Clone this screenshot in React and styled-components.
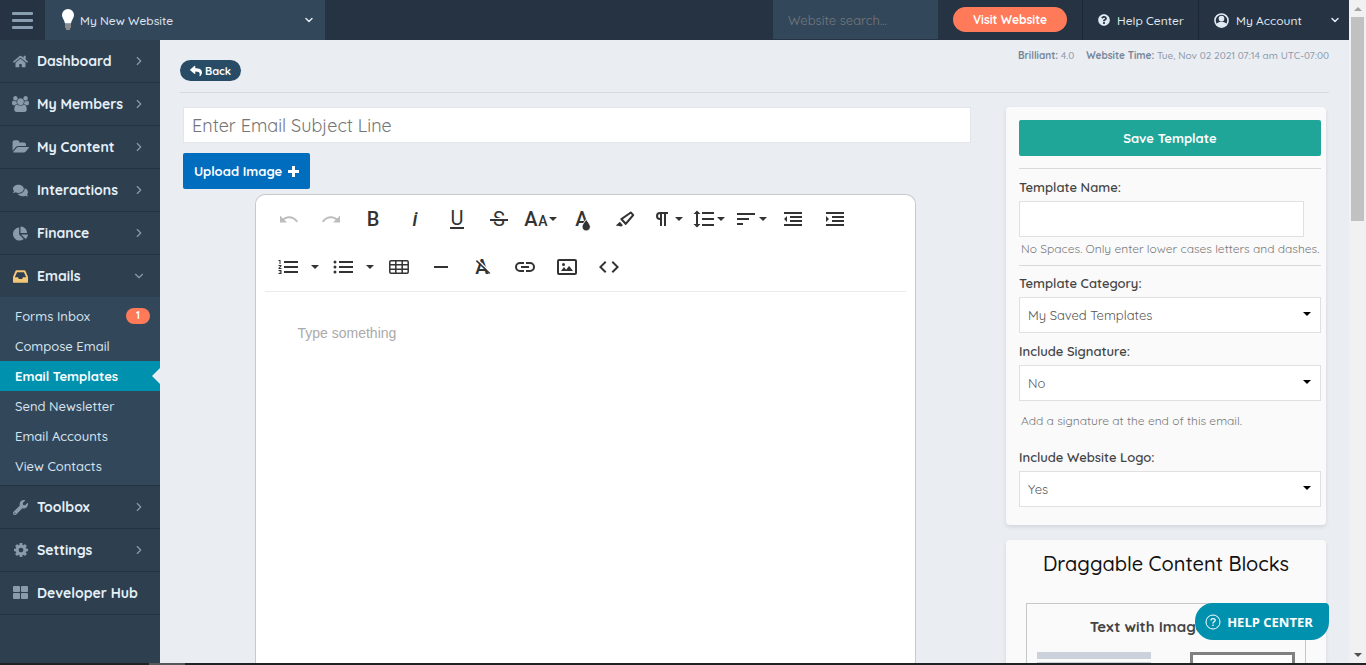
import React from 'react';
import styled, { createGlobalStyle, css } from 'styled-components';
import { FaHome, FaComments, FaChartPie, FaWrench, FaReply, FaQuestionCircle } from 'react-icons/fa';
import { FiChevronDown, FiChevronRight } from 'react-icons/fi';

const GlobalStyle = createGlobalStyle`
  * {
    box-sizing: border-box;
  }

  body {
    margin: 0;
    overflow: hidden;
    background: #eaedf2;
    color: #333;
    font-family: Quicksand, Lato, sans-serif;
    font-size: 13px;
  }

  button, input, select, textarea {
    font-family: inherit;
  }

  a {
    color: inherit;
    text-decoration: none;
  }
`;

const Screen = styled.div`
  display: flex;
  flex-direction: column;
  height: 100vh;
`;

const Viewport = styled.div`
  display: flex;
  flex: 1;
  min-height: 0;
`;

const Page = styled.div`
  display: flex;
  flex-direction: column;
  flex: 1;
  min-width: 0;
`;

const TopBar = styled.header`
  display: flex;
  height: 40px;
  flex-shrink: 0;
  background: #253342;
  color: #e1eaf2;
`;

const MenuToggle = styled.button`
  display: flex;
  flex-direction: column;
  align-items: center;
  justify-content: center;
  gap: 4px;
  width: 45px;
  padding: 0;
  border: 0;
  background: #253342;
`;

const MenuLine = styled.span`
  width: 21px;
  height: 3px;
  border-radius: 1px;
  background: #8a9eb2;
`;

const SitePicker = styled.button`
  display: flex;
  align-items: center;
  gap: 5px;
  width: 280px;
  padding: 0 10px 0 16px;
  border: 0;
  background: #33475b;
  color: #e1eaf2;
  font-size: 12px;
  font-weight: 500;

  > :last-child {
    margin-left: auto;
  }
`;

const TopActions = styled.div`
  display: flex;
  margin-left: auto;
`;

const SiteSearch = styled.input`
  width: 165px;
  height: 39px;
  padding: 0 15px;
  border: 0;
  background: #33475b;
  color: #e1eaf2;
  font-size: 13px;

  &::placeholder {
    color: #76797d;
  }
`;

const VisitWebsite = styled.a`
  align-self: flex-start;
  width: 114px;
  margin: 7px 15px 0;
  border-radius: 13px;
  background: #ff7a59;
  color: #fff;
  font-size: 12px;
  font-weight: 700;
  line-height: 25px;
  text-align: center;
`;

const TopLink = styled.a`
  display: flex;
  align-items: center;
  gap: 7px;
  width: ${(props) => props.$width}px;
  padding: 0 8px 0 15px;
  border-left: 1px solid #1b2733;
  font-size: 12px;
  font-weight: 500;
  white-space: nowrap;

  > :nth-child(3) {
    margin-left: auto;
  }
`;

const Body = styled.div`
  display: flex;
  flex: 1;
  min-height: 0;
  overflow: hidden;
`;

const Sidebar = styled.nav`
  width: 160px;
  flex-shrink: 0;
  background: #2e3f50;
`;

const NavItem = styled.a`
  display: flex;
  align-items: center;
  height: ${(props) => (props.$open ? 42 : 43)}px;
  padding: 0 14px 0 12px;
  border-bottom: ${(props) => (props.$open ? 0 : 1)}px solid #253342;
  color: #e5f0f8;
  font-size: 14px;
  font-weight: 700;
  white-space: nowrap;
`;

const NavIcon = styled.span`
  display: flex;
  justify-content: center;
  width: 17px;
  margin-right: 8px;
  color: ${(props) => (props.$open ? '#f5c878' : '#8a9bac')};
`;

const NavArrow = styled.span`
  display: flex;
  margin-left: auto;
  color: #8a9bac;
`;

const SubMenu = styled.div`
  padding: 4px 0;
  border-bottom: 1px solid #253342;
  background: #33475b;
`;

const SubItem = styled.a`
  position: relative;
  display: flex;
  align-items: center;
  justify-content: space-between;
  height: 30px;
  padding: 0 10px 0 15px;
  color: #d6e4ee;
  font-size: 13px;
  font-weight: 500;

  ${(props) =>
    props.$active &&
    css`
      background: #0091ae;
      color: #fff;
      font-weight: 700;

      &::after {
        content: '';
        position: absolute;
        top: 7px;
        right: 0;
        border: 8px solid transparent;
        border-left: 0;
        border-right-color: #eaedf2;
      }
    `}
`;

const CountBadge = styled.span`
  width: 24px;
  border-radius: 8px;
  background: #ff7a59;
  color: #fff;
  font-size: 10px;
  font-weight: 700;
  line-height: 16px;
  text-align: center;
`;

const Main = styled.main`
  display: flex;
  flex-direction: column;
  flex: 1;
  min-width: 0;
  padding: 0 20px;
`;

const PageHead = styled.div`
  display: flex;
  justify-content: space-between;
  align-items: flex-start;
  height: 53px;
  flex-shrink: 0;
  border-bottom: 1px solid #d6d9dd;
`;

const BackLink = styled.a`
  display: flex;
  align-items: center;
  gap: 3px;
  height: 21px;
  margin-top: 20px;
  padding: 0 10px;
  border-radius: 11px;
  background: #284b66;
  color: #fff;
  font-size: 11px;
  font-weight: 700;
`;

const SiteInfo = styled.div`
  display: flex;
  gap: 12px;
  margin-top: 9px;
  color: #8d99ab;
  font-size: 10px;
  font-weight: 500;
  line-height: 14px;

  b {
    color: #75869a;
  }
`;

const Columns = styled.div`
  display: flex;
  gap: 35px;
  flex: 1;
  min-height: 0;
  padding: 14px 3px 0;
`;

const EditorColumn = styled.section`
  display: flex;
  flex-direction: column;
  align-items: flex-start;
  flex: 1;
  min-width: 0;
`;

const SubjectInput = styled.input`
  width: 100%;
  height: 36px;
  flex-shrink: 0;
  padding: 0 8px;
  border: 1px solid #e3e5e8;
  background: #fff;
  font-size: 18px;

  &::placeholder {
    color: #757575;
  }
`;

const UploadButton = styled.button`
  display: flex;
  align-items: center;
  justify-content: center;
  gap: 6px;
  width: 127px;
  height: 36px;
  flex-shrink: 0;
  margin: 10px 0 5px;
  padding: 0;
  border: 0;
  border-radius: 2px;
  background: #006dbf;
  color: #fff;
  font-size: 13px;
  font-weight: 700;
`;

const Editor = styled.div`
  display: flex;
  flex-direction: column;
  flex: 1;
  align-self: center;
  width: 661px;
  max-width: 100%;
  min-height: 0;
  margin-left: 16px;
  padding: 0 9px;
  border: 1px solid #c8c9cb;
  border-bottom: 0;
  border-radius: 10px 10px 0 0;
  background: #fff;
`;

const Toolbar = styled.div`
  border-bottom: 1px solid #ebebeb;
`;

const ToolRow = styled.div`
  display: flex;
  height: 48px;
  padding-left: 5px;
`;

const ToolButton = styled.button`
  display: flex;
  align-items: center;
  justify-content: center;
  width: ${(props) => (props.$split ? 55 : 42)}px;
  padding: 0 ${(props) => (props.$split ? 0 : 4)}px 0 0;
  border: 0;
  background: transparent;
  color: #333;

  &:disabled {
    color: #bdbdbd;
  }

  svg {
    flex-shrink: 0;
  }
`;

const ToolCaret = styled.span`
  margin-left: ${(props) => (props.$wide ? 11 : 1)}px;
  border: 4px solid transparent;
  border-top-color: #333;
  border-bottom: 0;
`;

const MessageArea = styled.textarea`
  flex: 1;
  padding: 32px 33px;
  border: 0;
  outline: 0;
  resize: none;
  font-family: 'Liberation Sans', Arial, sans-serif;
  font-size: 14px;
  line-height: 18px;

  &::placeholder {
    color: #aaa;
  }
`;

const Aside = styled.aside`
  width: 320px;
  flex-shrink: 0;
`;

const Card = styled.section`
  margin-bottom: 15px;
  padding: 13px 5px 18px 13px;
  border-radius: 4px;
  background: #fafafa;
  box-shadow: 0 2px 4px rgba(0, 0, 0, 0.1);
`;

const SaveButton = styled.button`
  width: 100%;
  height: 36px;
  border: 0;
  border-radius: 2px;
  background: #1fa699;
  color: #fff;
  font-size: 13px;
  font-weight: 700;
`;

const Divider = styled.hr`
  margin: ${(props) => props.$top}px 0 0;
  border: 0;
  border-top: 1px solid #d9d9d9;
`;

const Label = styled.label`
  display: block;
  padding-top: ${(props) => props.$top}px;
  color: #444;
  font-size: 13px;
  font-weight: 600;
  line-height: 18px;
`;

const fieldStyles = css`
  display: block;
  height: 36px;
  padding: 0 8px;
  border: 1px solid #e0e0e0;
  border-radius: 0;
  background: #fff;
  color: #555;
  font-size: 13px;
`;

const NameInput = styled.input`
  ${fieldStyles}
  width: 285px;
  margin-top: 5px;
`;

const SelectWrap = styled.div`
  position: relative;
  margin-top: 5px;

  &::after {
    content: '';
    position: absolute;
    top: 15px;
    right: 10px;
    border: 4px solid transparent;
    border-top-color: #000;
    border-bottom: 0;
    pointer-events: none;
  }
`;

const Select = styled.select`
  ${fieldStyles}
  width: 100%;
  appearance: none;
`;

const Hint = styled.p`
  margin: ${(props) => props.$gap}px 0;
  padding-left: 2px;
  color: #777;
  font-size: 12px;
  line-height: 16px;
  white-space: nowrap;
`;

const BlocksTitle = styled.h2`
  margin: 0;
  color: #111;
  font-size: 20px;
  font-weight: 500;
  line-height: 24px;
  text-align: center;
`;

const BlocksCard = styled(Card)`
  padding: 12px 20px;
`;

const ContentBlock = styled.div`
  height: 150px;
  margin-top: 27px;
  padding: 13px 10px;
  border: 1px solid #c8c8c8;
`;

const BlockName = styled.div`
  padding-right: 38px;
  color: #444;
  font-size: 15px;
  font-weight: 700;
  line-height: 20px;
  text-align: center;
`;

const BlockPreview = styled.div`
  display: flex;
  justify-content: space-between;
  margin-top: 15px;
`;

const PreviewLines = styled.div`
  display: grid;
  gap: 3px;
  align-content: start;
  width: 114px;
`;

const PreviewLine = styled.div`
  height: 7px;
  background: #cbd2db;
`;

const PreviewImage = styled.div`
  width: 105px;
  height: 80px;
  border: 3px solid #808080;
  background: #fff;
`;

const HelpWidget = styled.button`
  position: fixed;
  right: 37px;
  bottom: 25px;
  display: flex;
  align-items: center;
  justify-content: center;
  gap: 6px;
  width: 134px;
  height: 37px;
  padding: 0 6px 0 0;
  border: 0;
  border-radius: 18px 4px 18px 18px;
  background: #0091ae;
  color: #fff;
  font-family: 'Open Sans', sans-serif;
  font-size: 13px;
  font-weight: 700;
`;

const ScrollTrack = styled.div`
  display: flex;
  flex-direction: column;
  align-items: center;
  justify-content: space-between;
  width: 17px;
  flex-shrink: 0;
  background: #f1f1f1;
`;

const ScrollThumb = styled.div`
  width: 13px;
  height: 204px;
  margin-bottom: auto;
  background: #c1c1c1;
`;

const ScrollArrow = styled.span`
  display: flex;
  align-items: center;
  height: 17px;
  color: ${(props) => (props.$off ? '#a3a3a3' : '#505050')};
`;

const BottomEdge = styled.div`
  height: 2px;
  flex-shrink: 0;
  padding-left: 149px;
  background: #202326;
`;

const BottomEdgeTab = styled.div`
  width: 36px;
  height: 2px;
  background: #55585a;
`;

const Icon = ({ children, size = 24 }) => (
  <svg width={size} height={size} viewBox="0 0 24 24" fill="currentColor" aria-hidden="true">
    {children}
  </svg>
);

const Glyph = (props) => (
  <text textAnchor="middle" fontFamily="Roboto, sans-serif" fontSize="20" fontWeight="500" {...props} />
);

const BulbIcon = () => (
  <svg width="14" height="24" viewBox="0 0 14 24" aria-hidden="true">
    <path d="M7 1a6 6 0 0 0-6 6c0 3 2.400 4.600 3 8.500h6C10.600 11.600 13 10 13 7a6 6 0 0 0-6-6Z" fill="#fff" />
    <path d="M4 17h6M4 19h6M5 21h4" stroke="#a8a29b" strokeWidth="1.500" />
  </svg>
);

const AccountIcon = () => (
  <svg width="15" height="15" viewBox="0 0 24 24" aria-hidden="true">
    <circle cx="12" cy="12" r="10.500" fill="none" stroke="currentColor" strokeWidth="2.600" />
    <circle cx="12" cy="9" r="4.500" fill="currentColor" />
    <path d="M4 18c1-3 4-3.500 8-3.500s7 .5 8 3.500c-2 2.500-4.500 4-8 4s-6-1.500-8-4Z" fill="currentColor" />
  </svg>
);

const PlusIcon = () => (
  <svg width="11" height="11" viewBox="0 0 11 11" fill="currentColor" aria-hidden="true">
    <path d="M4 0h3v4h4v3H7v4H4V7H0V4h4z" />
  </svg>
);

const UsersIcon = () => (
  <svg width="17" height="16" viewBox="0 0 1920 1792" fill="currentColor" aria-hidden="true">
    <path d="M593 896q-162 5-265 128h-134q-82 0-138-40.500t-56-118.500q0-353 124-353 6 0 43.500 21t97.500 42.500 119 21.500q67 0 133-23-5 37-5 66 0 139 81 256zm1071 637q0 120-73 189.500t-194 69.500h-874q-121 0-194-69.500t-73-189.500q0-53 3.500-103.500t14-109 26.500-108.500 43-97.500 62-81 85.500-53.500 111.500-20q10 0 43 21.500t73 48 107 48 135 21.500 135-21.500 107-48 73-48 43-21.500q61 0 111.500 20t85.500 53.500 62 81 43 97.500 26.500 108.500 14 109 3.500 103.500zm-1024-1277q0 106-75 181t-181 75-181-75-75-181 75-181 181-75 181 75 75 181zm704 384q0 159-112.500 271.500t-271.500 112.500-271.500-112.500-112.500-271.500 112.500-271.500 271.500-112.500 271.500 112.500 112.500 271.500zm576 225q0 78-56 118.500t-138 40.500h-134q-103-123-265-128 81-117 81-256 0-29-5-66 66 23 133 23 59 0 119-21.500t97.500-42.500 43.500-21q124 0 124 353zm-128-609q0 106-75 181t-181 75-181-75-75-181 75-181 181-75 181 75 75 181z" />
  </svg>
);

const FolderIcon = () => (
  <svg width="17" height="16" viewBox="0 0 1943 1792" fill="currentColor" aria-hidden="true">
    <path d="M1943 952q0 31-31 66l-336 396q-43 51-120.500 86.500t-143.500 35.500h-1088q-34 0-60.500-13t-26.500-43q0-31 31-66l336-396q43-51 120.500-86.500t143.500-35.500h1088q34 0 60.500 13t26.500 43zm-343-344v160h-832q-94 0-197 47.500t-164 119.500l-337 396-5 6q0-4-.5-12.500t-.5-12.500v-960q0-92 66-158t158-66h320q92 0 158 66t66 158v32h544q92 0 158 66t66 158z" />
  </svg>
);

const InboxIcon = () => (
  <svg width="15" height="15" viewBox="0 128 1536 1536" fill="currentColor" aria-hidden="true">
    <path d="M1023 960h316q-1-3-2.500-8.500t-2.500-7.500l-212-496h-708l-212 496q-1 3-2.500 8.500t-2.500 7.500h316l95 192h320zm513 30v482q0 26-19 45t-45 19h-1408q-26 0-45-19t-19-45v-482q0-62 25-123l238-552q10-25 36.500-42t52.500-17h832q26 0 52.500 17t36.500 42l238 552q25 61 25 123z" />
  </svg>
);

const CogIcon = () => (
  <svg width="14" height="14" viewBox="128 128 1536 1536" fill="currentColor" aria-hidden="true">
    <path d="M1152 896q0-106-75-181t-181-75-181 75-75 181 75 181 181 75 181-75 75-181zm512-109v222q0 12-8 23t-20 13l-185 28q-19 54-39 91 35 50 107 138 10 12 10 25t-9 23q-27 37-99 108t-94 71q-12 0-26-9l-138-108q-44 23-91 38-16 136-29 186-7 28-36 28h-222q-14 0-24.500-8.500t-11.500-21.500l-28-184q-49-16-90-37l-141 107q-10 9-25 9-14 0-25-11-126-114-165-168-7-10-7-23 0-12 8-23 15-21 51-66.500t54-70.500q-27-50-41-99l-183-27q-13-2-21-12.500t-8-23.500v-222q0-12 8-23t19-13l186-28q14-46 39-92-40-57-107-138-10-12-10-24 0-10 9-23 26-36 98.500-107.500t94.500-71.500q13 0 26 10l138 107q44-23 91-38 16-136 29-186 7-28 36-28h222q14 0 24.500 8.500t11.500 21.500l28 184q49 16 90 37l142-107q9-9 24-9 13 0 25 10 129 119 165 170 7 8 7 22 0 12-8 23-15 21-51 66.500t-54 70.500q26 50 41 98l183 28q13 2 21 12.500t8 23.500z" />
  </svg>
);

const GridIcon = () => (
  <svg width="15" height="14" viewBox="0 0 15 14" fill="currentColor" aria-hidden="true">
    <rect width="7" height="6" rx="1" />
    <rect x="8" width="7" height="6" rx="1" />
    <rect y="7" width="7" height="6" rx="1" />
    <rect x="8" y="7" width="7" height="6" rx="1" />
  </svg>
);

const undoPath =
  'M10.400 9.400c-1.700.3-3.200.9-4.600 2L3 8.500v7h7l-2.700-2.800c3.700-2.600 8.800-1.800 11.500 1.900.2.2.3.5.5.7l1.800-.9C18.900 10.800 14.700 8.700 10.400 9.400z';

const firstRow = [
  { name: 'Undo', disabled: true, icon: <path d={undoPath} /> },
  { name: 'Redo', disabled: true, icon: <path d={undoPath} transform="translate(24 0) scale(-1 1)" /> },
  { name: 'Bold', icon: <Glyph x="12" y="19">B</Glyph> },
  { name: 'Italic', icon: <Glyph x="12" y="19" fontStyle="italic">i</Glyph> },
  {
    name: 'Underline',
    icon: (
      <>
        <Glyph x="12" y="18" fontWeight="400">U</Glyph>
        <path d="M5 20h14v2H5z" />
      </>
    ),
  },
  {
    name: 'Strikethrough',
    icon: (
      <>
        <Glyph x="12" y="19" fontWeight="400">S</Glyph>
        <path d="M2 11h20v3H2z" fill="#fff" />
        <path d="M3 12h18v2H3z" />
      </>
    ),
  },
  {
    name: 'Font Size',
    caret: true,
    icon: (
      <>
        <Glyph x="7" y="19">A</Glyph>
        <Glyph x="19" y="19" fontSize="14">A</Glyph>
      </>
    ),
  },
  {
    name: 'Text Color',
    icon: (
      <>
        <Glyph x="11" y="19">A</Glyph>
        <path
          d="M15.200 12.500s-4.200 4.900-4.200 7.300a4.200 4.200 0 0 0 8.400 0c0-2.400-4.200-7.300-4.200-7.300Z"
          stroke="#fff"
        />
      </>
    ),
  },
  {
    name: 'Background Color',
    icon: (
      <path d="M9.900 12.200l7.800-5.400 1.200 1.300-6.100 7.200-2.900-3.100M7.600 12.700l4.500 5a.9.9 0 0 0 1.400-.1l7.500-8.900a.9.9 0 0 0 0-1.200l-2.500-2.700a.9.9 0 0 0-1.200-.1l-9.500 6.600a.9.9 0 0 0-.2 1.400ZM2.800 18.500l5.600 1 1.500-1.300-3-3.400Z" />
    ),
  },
  {
    name: 'Paragraph Format',
    caret: true,
    icon: (
      <path d="M10 5a4 4 0 0 0 0 8v6h2V7h2v12h2V7h2V5ZM8 9a2 2 0 0 1 2-2v4a2 2 0 0 1-2-2Z" />
    ),
  },
  {
    name: 'Line Height',
    caret: true,
    icon: (
      <path d="M6 7h2.500L5 3.500 1.500 7H4v10H1.500L5 20.500 8.500 17H6Zm4-2v2h12V5Zm0 14h12v-2H10Zm0-6h12v-2H10Z" />
    ),
  },
  { name: 'Align', caret: true, icon: <path d="M3 6h18v2H3zM3 11h12v2H3zM3 16h6v2H3z" /> },
  { name: 'Decrease Indent', icon: <path d="M3 5h18v2H3zM9 9h12v2H9zM9 13h12v2H9zM3 17h18v2H3zM3 12l3-3v6z" /> },
  { name: 'Increase Indent', icon: <path d="M3 5h18v2H3zM9 9h12v2H9zM9 13h12v2H9zM3 17h18v2H3zM6 12L3 9v6z" /> },
];

const secondRow = [
  {
    name: 'Ordered List',
    split: true,
    icon: (
      <path d="M2.500 16h2v.5h-1v1h1v.5h-2v1h3v-4h-3Zm1-7h1V5h-2v1h1Zm-1 2h1.800l-1.800 2.100v.9h3v-1H3.700l1.800-2.100V10h-3ZM8 6v2h14V6Zm0 12h14v-2H8Zm0-5h14v-2H8Z" />
    ),
  },
  {
    name: 'Unordered List',
    split: true,
    icon: (
      <>
        <circle cx="4" cy="7" r="1.500" />
        <circle cx="4" cy="12" r="1.500" />
        <circle cx="4" cy="17" r="1.500" />
        <path d="M8 6h14v2H8zM8 11h14v2H8zM8 16h14v2H8z" />
      </>
    ),
  },
  {
    name: 'Insert Table',
    icon: (
      <path
        d="M4 5.800h16a1.200 1.200 0 0 1 1.200 1.200v10a1.200 1.200 0 0 1-1.200 1.200H4A1.200 1.200 0 0 1 2.800 17V7A1.200 1.200 0 0 1 4 5.800ZM3 9.800h18M3 14.200h18M8.800 6v12M15.200 6v12"
        fill="none"
        stroke="currentColor"
        strokeWidth="1.500"
      />
    ),
  },
  { name: 'Insert Horizontal Line', icon: <path d="M5 11h14v2H5z" /> },
  {
    name: 'Clear Formatting',
    icon: (
      <>
        <Glyph x="11" y="19">A</Glyph>
        <path d="M6 4l14 14" stroke="#fff" strokeWidth="1.500" />
        <path d="M5.400 5.600l13.400 12.900" stroke="currentColor" strokeWidth="1.500" />
      </>
    ),
  },
  {
    name: 'Insert Link',
    icon: (
      <path d="M11 17H7A5 5 0 0 1 7 7h4v2H7a3 3 0 0 0 0 6h4ZM17 7h-4v2h4a3 3 0 0 1 0 6h-4v2h4a5 5 0 0 0 0-10Zm-1 4H8v2h8Z" />
    ),
  },
  {
    name: 'Insert Image',
    icon: (
      <path d="M14.200 11l3.800 5H6l3-3.900 2.100 2.700L14 11ZM8.500 11a1.500 1.500 0 1 0 0-3 1.500 1.500 0 0 0 0 3ZM22 6v12a2 2 0 0 1-2 2H4a2 2 0 0 1-2-2V6a2 2 0 0 1 2-2h16a2 2 0 0 1 2 2ZM20 6H4v12h16Z" />
    ),
  },
  { name: 'Code View', icon: <path d="M9.400 16.600 4.800 12l4.600-4.600L8 6l-6 6 6 6Zm5.200 0 4.600-4.600-4.600-4.600L16 6l6 6-6 6Z" /> },
];

const menuTop = [
  { label: 'Dashboard', icon: FaHome, arrow: true },
  { label: 'My Members', icon: UsersIcon, arrow: true },
  { label: 'My Content', icon: FolderIcon, arrow: true },
  { label: 'Interactions', icon: FaComments, arrow: true },
  { label: 'Finance', icon: FaChartPie, arrow: true },
  { label: 'Emails', icon: InboxIcon, arrow: true, open: true },
];

const menuBottom = [
  { label: 'Toolbox', icon: FaWrench, arrow: true },
  { label: 'Settings', icon: CogIcon, arrow: true },
  { label: 'Developer Hub', icon: GridIcon },
];

const emailItems = [
  { label: 'Forms Inbox', count: 1 },
  { label: 'Compose Email' },
  { label: 'Email Templates', active: true },
  { label: 'Send Newsletter' },
  { label: 'Email Accounts' },
  { label: 'View Contacts' },
];

const NavList = ({ items }) =>
  items.map(({ label, icon: ItemIcon, arrow, open }) => (
    <NavItem href="#" key={label} $open={open}>
      <NavIcon $open={open}>
        <ItemIcon size={15} />
      </NavIcon>
      {label}
      {arrow && <NavArrow>{open ? <FiChevronDown size={14} /> : <FiChevronRight size={14} />}</NavArrow>}
    </NavItem>
  ));

const Tools = ({ items }) => (
  <ToolRow>
    {items.map(({ name, icon, caret, split, disabled }) => (
      <ToolButton key={name} type="button" aria-label={name} disabled={disabled} $split={split}>
        <Icon>{icon}</Icon>
        {(caret || split) && <ToolCaret $wide={split} />}
      </ToolButton>
    ))}
  </ToolRow>
);

const SelectField = ({ id, label, value, top }) => (
  <>
    <Label htmlFor={id} $top={top}>{label}</Label>
    <SelectWrap>
      <Select id={id} defaultValue={value}>
        <option>{value}</option>
      </Select>
    </SelectWrap>
  </>
);

const App = () => {
  return (
    <Screen>
      <GlobalStyle />
      <Viewport>
        <Page>
          <TopBar>
            <MenuToggle type="button" aria-label="Menu">
              <MenuLine />
              <MenuLine />
              <MenuLine />
            </MenuToggle>
            <SitePicker type="button">
              <BulbIcon />
              <span>My New Website</span>
              <FiChevronDown size={12} strokeWidth={3} />
            </SitePicker>
            <TopActions>
              <SiteSearch type="text" aria-label="Website search" placeholder="Website search..." />
              <VisitWebsite href="#">Visit Website</VisitWebsite>
              <TopLink href="#" $width={116}>
                <FaQuestionCircle size={12} />
                <span>Help Center</span>
              </TopLink>
              <TopLink href="#" $width={151}>
                <AccountIcon />
                <span>My Account</span>
                <FiChevronDown size={12} strokeWidth={3} />
              </TopLink>
            </TopActions>
          </TopBar>
          <Body>
            <Sidebar>
              <NavList items={menuTop} />
              <SubMenu>
                {emailItems.map((item) => (
                  <SubItem href="#" key={item.label} $active={item.active}>
                    {item.label}
                    {item.count && <CountBadge>{item.count}</CountBadge>}
                  </SubItem>
                ))}
              </SubMenu>
              <NavList items={menuBottom} />
            </Sidebar>
            <Main>
              <PageHead>
                <BackLink href="#">
                  <FaReply size={12} />
                  Back
                </BackLink>
                <SiteInfo>
                  <span><b>Brilliant:</b> 4.0</span>
                  <span><b>Website Time:</b> Tue, Nov 02 2021 07:14 am UTC-07:00</span>
                </SiteInfo>
              </PageHead>
              <Columns>
                <EditorColumn>
                  <SubjectInput type="text" aria-label="Email subject" placeholder="Enter Email Subject Line" />
                  <UploadButton type="button">
                    Upload Image
                    <PlusIcon />
                  </UploadButton>
                  <Editor>
                    <Toolbar>
                      <Tools items={firstRow} />
                      <Tools items={secondRow} />
                    </Toolbar>
                    <MessageArea aria-label="Message" placeholder="Type something" />
                  </Editor>
                </EditorColumn>
                <Aside>
                  <Card>
                    <SaveButton type="button">Save Template</SaveButton>
                    <Divider $top={12} />
                    <Label htmlFor="template-name" $top={9}>Template Name:</Label>
                    <NameInput id="template-name" type="text" />
                    <Hint $gap={4}>No Spaces. Only enter lower cases letters and dashes.</Hint>
                    <Divider $top={8} />
                    <SelectField id="category" label="Template Category:" value="My Saved Templates" top={8} />
                    <SelectField id="signature" label="Include Signature:" value="No" top={9} />
                    <Hint $gap={12}>Add a signature at the end of this email.</Hint>
                    <SelectField id="logo" label="Include Website Logo:" value="Yes" top={7} />
                  </Card>
                  <BlocksCard>
                    <BlocksTitle>Draggable Content Blocks</BlocksTitle>
                    <ContentBlock>
                      <BlockName>Text with Image</BlockName>
                      <BlockPreview>
                        <PreviewLines>
                          <PreviewLine />
                          <PreviewLine />
                          <PreviewLine />
                        </PreviewLines>
                        <PreviewImage />
                      </BlockPreview>
                    </ContentBlock>
                  </BlocksCard>
                </Aside>
              </Columns>
            </Main>
          </Body>
        </Page>
        <ScrollTrack>
          <ScrollArrow $off>
            <svg width="8" height="4" viewBox="0 0 8 4" fill="currentColor"><path d="M0 4l4-4 4 4z" /></svg>
          </ScrollArrow>
          <ScrollThumb />
          <ScrollArrow>
            <svg width="8" height="4" viewBox="0 0 8 4" fill="currentColor"><path d="M0 0h8L4 4z" /></svg>
          </ScrollArrow>
        </ScrollTrack>
      </Viewport>
      <BottomEdge>
        <BottomEdgeTab />
      </BottomEdge>
      <HelpWidget type="button">
        <svg width="16" height="16" viewBox="0 0 16 16" aria-hidden="true">
          <circle cx="8" cy="8" r="7" fill="none" stroke="currentColor" />
          <path
            d="M6 6.500C6 3.900 10.200 4 10.200 6.300 10.200 7.800 8 7.800 8 9.400M8 10.600v1.400"
            fill="none"
            stroke="currentColor"
            strokeWidth="1.300"
          />
        </svg>
        HELP CENTER
      </HelpWidget>
    </Screen>
  );
};

export default App;
